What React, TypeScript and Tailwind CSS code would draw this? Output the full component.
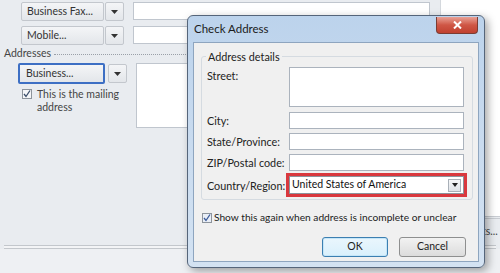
import React from "react";

const font = { fontFamily: 'Lato, "Open Sans", Arial, sans-serif' };

function Arrow() {
  return (
    <svg width="7" height="4" viewBox="0 0 7 4">
      <path d="M0 0 L7 0 L3.5 4 Z" fill="#333" />
    </svg>
  );
}

function FormButton({ label, active }: { label: string; active?: boolean }) {
  return (
    <div className="flex items-center">
      {active ? (
        <div className="ml-[-3px] flex h-[21px] w-[87px] items-center rounded-[2px] border-2 border-[#3d6fc4] bg-gradient-to-b from-[#f4f5f7] to-[#e3e6ea] pl-[6px] text-[10.5px] text-[#333]">
          {label}
        </div>
      ) : (
        <div className="flex h-[19px] w-[83px] items-center rounded-[2px] border border-[#c3c7cd] bg-gradient-to-b from-[#f4f5f7] to-[#e3e6ea] pl-[5px] text-[10.5px] text-[#333]">
          {label}
        </div>
      )}
      <div
        className={`flex h-[19px] w-[19px] items-center justify-center rounded-[2px] border border-[#c3c7cd] bg-gradient-to-b from-[#f4f5f7] to-[#e3e6ea] ${
          active ? "ml-[3px]" : "ml-[1px]"
        }`}
      >
        <Arrow />
      </div>
    </div>
  );
}

function Field({ label, h, mt }: { label: string; h: string; mt: string }) {
  return (
    <div className={`flex ${mt}`}>
      <div className="w-[82px] whitespace-nowrap pt-[2px] text-[10.8px] leading-[13px] text-[#222]">{label}</div>
      <div className={`w-[175px] ${h} border border-[#abb3bd] bg-white`} />
    </div>
  );
}

export default function App() {
  return (
    <div className="relative h-[273px] w-[500px] overflow-hidden bg-[#e9ecf0]" style={font}>
      {/* background form */}
      <div className="flex h-[216px]">
        <div className="w-[440px] pt-[2px]">
          <div className="flex items-start pl-[21px]">
            <FormButton label="Business Fax..." />
            <div className="ml-[9px] h-[18px] w-[297px] border border-[#c0c6ce] bg-white" />
          </div>
          <div className="mt-[5px] flex items-start pl-[21px]">
            <FormButton label="Mobile..." />
            <div className="ml-[9px] h-[18px] w-[297px] border border-[#c0c6ce] bg-white" />
          </div>
          <div className="mt-[1px] flex items-center pl-[4px]">
            <span className="text-[10.5px] leading-[14px] text-[#444]">Addresses</span>
            <div className="ml-[3px] mt-[2px] h-0 flex-1 border-t border-dotted border-[#9aa0a8]" />
          </div>
          <div className="mt-[3px] flex items-start pl-[21px]">
            <div>
              <FormButton label="Business..." active />
              <div className="mt-[5px] flex items-start pl-[1px]">
                <div className="flex h-[10px] w-[10px] shrink-0 items-center justify-center border border-[#8d949c] bg-[#f5f6f8]">
                  <svg width="8" height="8" viewBox="0 0 8 8">
                    <path d="M1 4 L3 6.5 L7 0.5" stroke="#3a4d6a" strokeWidth="1.3" fill="none" />
                  </svg>
                </div>
                <div className="ml-[5px] mt-[-1px] text-[10.5px] leading-[13px] text-[#444]">
                  This is the mailing
                  <br />
                  address
                </div>
              </div>
            </div>
            <div className="ml-[9px] h-[65px] flex-1 border border-[#c0c6ce] bg-white" />
          </div>
        </div>
        <div className="flex-1 border-l border-[#d4d8dd] bg-white" />
      </div>
      <div className="flex h-[29px]">
        <div className="w-[440px]" />
        <div className="flex-1 border-t-[3px] border-double border-[#c8ccd2] pl-[42px] pt-[5px] text-[10.5px] text-[#444]">
          ts...
        </div>
      </div>
      <div className="mx-[4px] h-[4px] border-y border-[#c3c7cc] bg-[#f3f4f6]" />
      <div className="h-[24px] bg-[#eef0f3]" />

      {/* Check Address dialog */}
      <div className="absolute left-[187px] top-[15px] h-[253px] w-[298px] rounded-[6px] border border-[#55657a] bg-gradient-to-b from-[#bcd3ec] via-[#c9dbef] to-[#d3e2f2] shadow-[3px_3px_8px_rgba(0,0,0,0.35)]">
        <div className="absolute right-[6px] top-[1px] flex h-[17px] w-[42px] items-center justify-center rounded-b-[4px] border border-t-0 border-[#7b3c33] bg-gradient-to-b from-[#e7a095] via-[#cf5645] to-[#c04130]">
          <svg width="9" height="8" viewBox="0 0 9 8">
            <path d="M1 0.5 L8 7.5 M8 0.5 L1 7.5" stroke="white" strokeWidth="2" />
          </svg>
        </div>
        <div className="flex h-[26px] items-center pl-[6px] text-[11.5px] text-[#1a1a1a]">Check Address</div>
        <div className="mx-[5px] h-[220px] border border-[#8ea5bf] bg-[#f0f0f0] px-[7px] pt-[13px]">
          <div className="relative h-[144px] w-[272px] rounded-[3px] border border-[#d5dbe1] pl-[5px] pt-[10px]">
            <div className="absolute left-[4px] top-[-8px] bg-[#f0f0f0] px-[2px] text-[10.8px] text-[#222]">
              Address details
            </div>
            <Field label="Street:" h="h-[40px]" mt="mt-0" />
            <Field label="City:" h="h-[17px]" mt="mt-[5px]" />
            <Field label="State/Province:" h="h-[17px]" mt="mt-[4px]" />
            <Field label="ZIP/Postal code:" h="h-[17px]" mt="mt-[4px]" />
            <div className="mt-[5px] flex items-center">
              <div className="w-[82px] whitespace-nowrap text-[10.8px] leading-[13px] text-[#222]">Country/Region:</div>
              <div className="flex h-[18px] w-[175px] items-center justify-between border border-[#8b939c] bg-white pl-[2px] pr-[2px] text-[10.5px] text-[#111] outline-[3px] outline-solid outline-[#d9383e]">
                <span>United States of America</span>
                <div className="flex h-[13px] w-[13px] items-center justify-center border border-[#a9b0b8] bg-gradient-to-b from-[#f6f7f8] to-[#dfe3e8]">
                  <svg width="6" height="4" viewBox="0 0 6 4">
                    <path d="M0 0 L6 0 L3 4 Z" fill="#222" />
                  </svg>
                </div>
              </div>
            </div>
          </div>
          <div className="mt-[10px] flex items-center pl-[1px]">
            <div className="flex h-[10px] w-[10px] shrink-0 items-center justify-center border border-[#8d949c] bg-[#e9eef6]">
              <svg width="8" height="8" viewBox="0 0 8 8">
                <path d="M1 4 L3 6.5 L7 0.5" stroke="#3a5a9a" strokeWidth="1.3" fill="none" />
              </svg>
            </div>
            <span className="ml-[2px] whitespace-nowrap text-[10.2px] text-[#222]">
              Show this again when address is incomplete or unclear
            </span>
          </div>
          <div className="mt-[12px] flex justify-end gap-[11px] pr-[5px]">
            <div className="flex h-[20px] w-[66px] items-center justify-center rounded-[3px] border border-[#3c7fb1] bg-gradient-to-b from-[#eaf6fd] to-[#d9f0fc] text-[10.5px] text-[#222] shadow-[inset_0_0_0_1px_#c5e6f8]">
              OK
            </div>
            <div className="flex h-[20px] w-[67px] items-center justify-center rounded-[3px] border border-[#8e8f8f] bg-gradient-to-b from-[#f2f2f2] to-[#dcdcdc] text-[10.5px] text-[#222]">
              Cancel
            </div>
          </div>
        </div>
      </div>
    </div>
  );
}
